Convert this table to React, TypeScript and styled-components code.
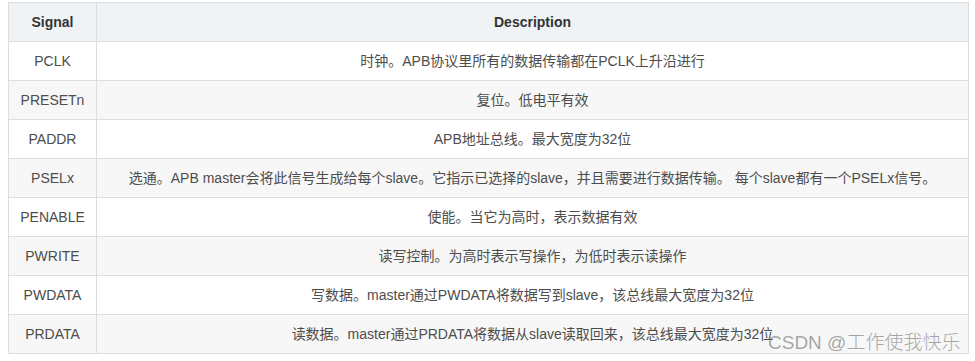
import React from "react";
import styled, { createGlobalStyle } from "styled-components";

const Global = createGlobalStyle`
  html, body { margin: 0; padding: 0; background: #fff; }
  body { font-family: "Liberation Sans", Arial, "Noto Sans CJK SC", sans-serif; }
`;

const Page = styled.div`
  position: relative;
  padding: 2px 6px 0 8px;
  width: 961px;
`;

const Table = styled.table`
  width: 961px;
  border-collapse: collapse;
  table-layout: fixed;
  font-size: 14px;
  color: #4d4d4d;
`;

const HeadCell = styled.th`
  height: 38px;
  padding: 0 8px;
  border: 1px solid #dddddd;
  background: #eff3f5;
  color: #333333;
  font-weight: bold;
  text-align: center;
  line-height: 22px;
`;

const Row = styled.tr<{ $alt: boolean }>`
  background: ${(p) => (p.$alt ? "#f7f7f7" : "#ffffff")};
`;

const Cell = styled.td`
  height: 38px;
  padding: 0 8px;
  border: 1px solid #dddddd;
  text-align: center;
  line-height: 22px;
  white-space: nowrap;
`;

const Watermark = styled.div`
  position: absolute;
  left: 768px;
  top: 332px;
  font-size: 19px;
  line-height: 22px;
  font-weight: 300;
  color: rgba(110, 110, 110, 0.6);
  white-space: nowrap;
  font-family: "Liberation Sans", Arial, "Noto Sans CJK SC", sans-serif;
`;

const rows: [string, string][] = [
  ["PCLK", "时钟。APB协议里所有的数据传输都在PCLK上升沿进行"],
  ["PRESETn", "复位。低电平有效"],
  ["PADDR", "APB地址总线。最大宽度为32位"],
  ["PSELx", "选通。APB master会将此信号生成给每个slave。它指示已选择的slave，并且需要进行数据传输。 每个slave都有一个PSELx信号。"],
  ["PENABLE", "使能。当它为高时，表示数据有效"],
  ["PWRITE", "读写控制。为高时表示写操作，为低时表示读操作"],
  ["PWDATA", "写数据。master通过PWDATA将数据写到slave，该总线最大宽度为32位"],
  ["PRDATA", "读数据。master通过PRDATA将数据从slave读取回来，该总线最大宽度为32位"],
];

export default function App() {
  return (
    <>
      <Global />
      <Page>
        <Table>
          <colgroup>
            <col style={{ width: 88 }} />
            <col />
          </colgroup>
          <thead>
            <tr>
              <HeadCell>Signal</HeadCell>
              <HeadCell>Description</HeadCell>
            </tr>
          </thead>
          <tbody>
            {rows.map(([s, d], i) => (
              <Row key={s} $alt={i % 2 === 1}>
                <Cell>{s}</Cell>
                <Cell>{d}</Cell>
              </Row>
            ))}
          </tbody>
        </Table>
        <Watermark>CSDN @工作使我快乐</Watermark>
      </Page>
    </>
  );
}
